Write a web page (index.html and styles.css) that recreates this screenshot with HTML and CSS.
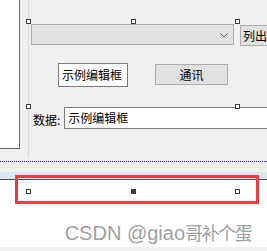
FILE: index.html
```html
<!DOCTYPE html>
<html>
<head>
<meta charset="utf-8">
<link rel="stylesheet" href="styles.css">
</head>
<body>
<div class="designer">
  <div class="leftpane"></div>
  <div class="form">
    <div class="row row1">
      <div class="combo">
        <svg class="chev" width="8" height="5" viewBox="0 0 8 5"><path d="M0.5 0.5 L4 4 L7.5 0.5" fill="none" stroke="#606060" stroke-width="1"/></svg>
      </div>
      <div class="btn btn-list">列出...</div>
    </div>
    <div class="row row2">
      <div class="edit edit-sample">示例编辑框</div>
      <div class="btn btn-comm">通讯</div>
    </div>
    <div class="row row3">
      <span class="label">数据:</span>
      <div class="edit edit-wide">示例编辑框</div>
    </div>
    <span class="handle h-tl"></span>
    <span class="handle h-tm"></span>
    <span class="handle h-tr"></span>
    <span class="handle h-bl"></span>
    <span class="handle h-br"></span>
  </div>
</div>
<div class="dots"></div>
<div class="gap"></div>
<div class="band"></div>
<div class="bottom">
  <div class="selection">
    <span class="handle b-l"></span>
    <span class="handle b-m"></span>
    <span class="handle b-r"></span>
  </div>
  <div class="watermark"><span class="wm-latin">CSDN @giao</span><span class="wm-cjk">哥补个蛋</span></div>
</div>
<div class="footer"></div>
</body>
</html>
```

FILE: styles.css
```css
html, body {
  margin: 0;
  padding: 0;
}
body {
  width: 267px;
  height: 251px;
  overflow: hidden;
  background: #ffffff;
  font-family: "Noto Sans CJK SC", "Liberation Sans", sans-serif;
  font-size: 12px;
  color: #000;
  position: relative;
}
.designer {
  height: 161px;
  background: #f0f0f0;
  display: flex;
  align-items: flex-start;
}
.leftpane {
  width: 19px;
  height: 148px;
  background: #ffffff;
  border-right: 1px solid #696969;
  border-bottom: 1px solid #696969;
  flex: none;
}
.form {
  position: relative;
  margin-left: 8px;
  height: 158px;
  border-left: 1px solid #dadada;
  flex: 1;
}
.row {
  display: flex;
  align-items: flex-start;
}
.row1 {
  margin-top: 24px;
  padding-left: 2px;
}
.combo {
  width: 203px;
  height: 21px;
  box-sizing: border-box;
  background: #e1e1e1;
  border: 1px solid #adadad;
  display: flex;
  align-items: center;
  justify-content: flex-end;
  padding-right: 5px;
  flex: none;
}
.chev {
  display: block;
  margin-top: 1px;
}
.btn {
  box-sizing: border-box;
  background: #e1e1e1;
  border: 1px solid #adadad;
  height: 21px;
  line-height: 19px;
  flex: none;
  white-space: nowrap;
}
.btn-list {
  margin-left: 6px;
  margin-top: 1px;
  width: 60px;
  padding-left: 2px;
}
.row2 {
  margin-top: 17px;
  padding-left: 29px;
}
.edit {
  box-sizing: border-box;
  background: #ffffff;
  border: 1px solid #7a7a7a;
  white-space: nowrap;
  flex: none;
}
.edit-sample {
  width: 70px;
  height: 24px;
  line-height: 22px;
  padding-left: 3px;
}
.btn-comm {
  margin-left: 27px;
  margin-top: 1px;
  width: 73px;
  text-align: center;
}
.row3 {
  margin-top: 20px;
  padding-left: 4px;
  align-items: center;
}
.label {
  flex: none;
  margin-top: 3px;
}
.edit-wide {
  margin-left: 4px;
  width: 220px;
  height: 22px;
  line-height: 20px;
  padding-left: 3px;
}
.handle {
  position: absolute;
  width: 5px;
  height: 5px;
  box-sizing: border-box;
  border: 1px solid #3c3c3c;
  background: #ffffff;
}
.h-tl { left: -3px; top: 19px; }
.h-tm { left: 102px; top: 19px; }
.h-tr { left: 206px; top: 19px; }
.h-bl { left: -3px; top: 104px; }
.h-br { left: 206px; top: 104px; }
.dots {
  height: 1px;
  background-image: linear-gradient(to right, #1a1aff 50%, transparent 50%);
  background-size: 2px 1px;
  background-color: #f0f0f0;
}
.gap {
  height: 10px;
  background: #f0f0f0;
}
.band {
  height: 7px;
  background: #dbe6f3;
  border-bottom: 1px solid #4a4a4a;
}
.bottom {
  height: 67px;
  position: relative;
}
.selection {
  position: absolute;
  left: 15px;
  top: -5px;
  width: 244px;
  height: 29px;
  box-sizing: border-box;
  border: 3px solid #ee3b3b;
}
.b-l { left: 8px; top: 11px; }
.b-m { left: 113px; top: 11px; background: #3c3c3c; }
.b-r { left: 217px; top: 11px; }
.watermark {
  position: absolute;
  right: 16px;
  top: 40px;
  color: #a0a0a0;
  font-size: 20px;
  line-height: 24px;
  white-space: nowrap;
  display: flex;
  align-items: baseline;
}
.wm-latin {
  font-family: "Liberation Sans", sans-serif;
}
.wm-cjk {
  font-family: "Noto Sans CJK SC", sans-serif;
  font-size: 18px;
  letter-spacing: -1.5px;
}
.footer {
  height: 4px;
  background: #f0f0f0;
}
```
